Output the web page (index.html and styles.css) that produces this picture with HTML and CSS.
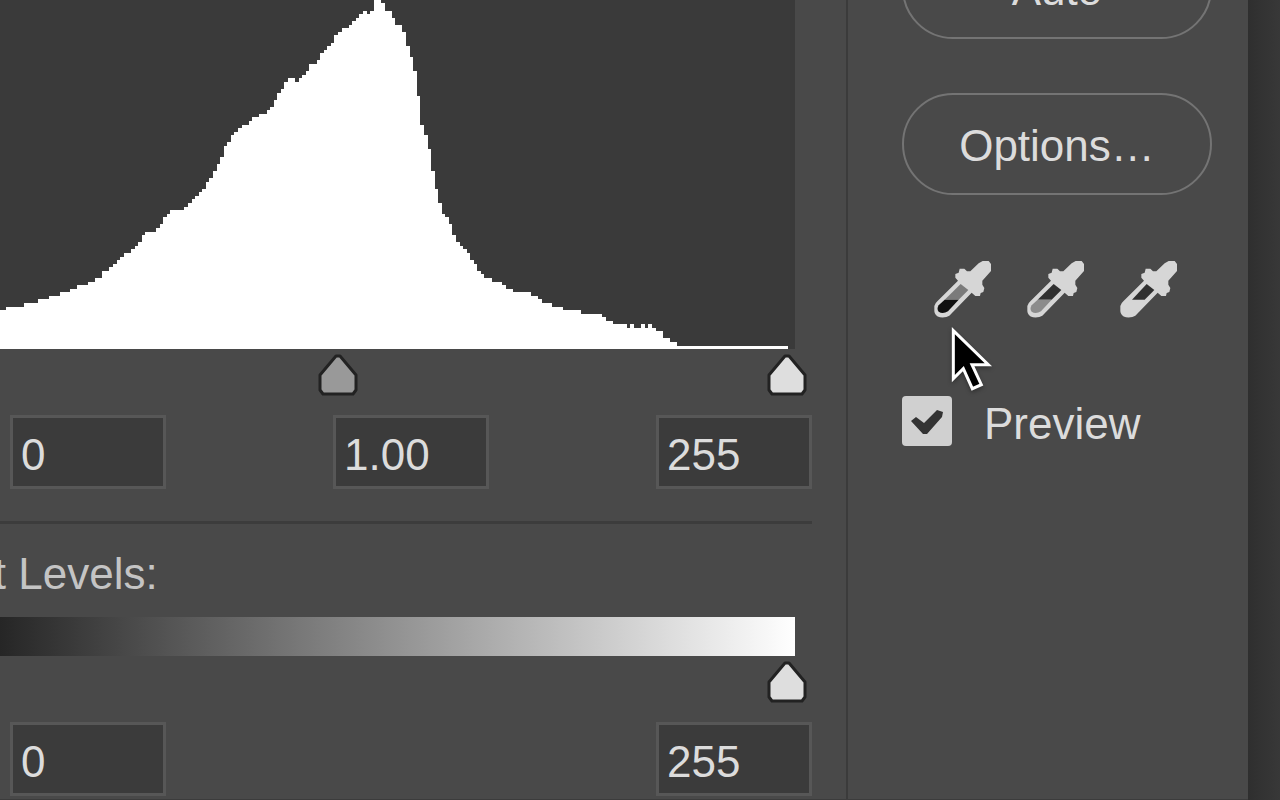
FILE: index.html
```html
<!DOCTYPE html>
<html lang="en">
<head>
  <meta charset="UTF-8" />
  <meta name="viewport" content="width=device-width, initial-scale=1.0" />
  <title>Levels</title>
  <link rel="stylesheet" href="styles.css">
</head>
<body>
  <div class="dialog">
    <main class="levels">
      <svg class="histogram" viewBox="0 0 2385 1047" preserveAspectRatio="none" role="img" aria-label="Histogram">
        <path d="M0 1047V930H18V920H72V909H115V898H147V888H179V877H211V866H232V856H265V845H286V834H307V813H328V802H339V791H350V780H361V770H371V759H393V748H404V738H414V727H425V706H436V695H467V684H479V673H490V652H500V641H511V631H553V620H564V609H575V598H585V588H596V577H607V566H617V545H628V534H639V513H650V491H660V470H671V438H682V427H693V406H703V395H714V384H725V374H746V363H757V352H778V342H800V331H810V320H821V299H832V278H843V267H853V245H864V235H886V245H896V235H907V224H918V213H928V192H950V181H960V160H971V149H982V138H993V128H1003V106H1014V96H1025V85H1046V74H1057V64H1068V53H1078V42H1089V32H1100V42H1111V32H1121V0H1143V10H1154V32H1175V53H1186V74H1207V96H1218V138H1229V170H1240V213H1250V288H1261V374H1272V406H1283V448H1293V513H1304V566H1315V609H1325V641H1336V652H1347V673H1357V706H1368V727H1379V738H1390V748H1401V759H1411V780H1422V791H1432V813H1443V823H1453V834H1475V845H1507V856H1518V866H1540V877H1592V888H1614V898H1625V909H1657V920H1690V930H1743V941H1807V952H1818V962H1839V973H1882V984H1891V973H1902V984H1923V973H1935V984H1945V973H1957V984H1968V994H1989V1015H2010V1026H2032V1037H2364V1047Z" />
      </svg>

      <div class="slider">
        <input class="mid" type="range" min="0" max="1000" value="414" aria-label="Midtones">
        <input type="range" min="0" max="255" value="255" aria-label="Highlights">
      </div>
      <div class="fields">
        <input type="text" value="0" aria-label="Input shadows">
        <input type="text" value="1.00" aria-label="Input midtones">
        <input type="text" value="255" aria-label="Input highlights">
      </div>

      <hr>

      <h2>Output Levels:</h2>
      <div class="ramp"></div>
      <div class="slider">
        <input type="range" min="0" max="255" value="255" aria-label="Output highlights">
      </div>
      <div class="fields">
        <input type="text" value="0" aria-label="Output shadows">
        <input type="text" value="255" aria-label="Output highlights value">
      </div>
    </main>

    <aside class="actions">
      <button class="pill" type="button">Auto</button>
      <button class="pill" type="button">Options…</button>

      <div class="droppers">
        <button type="button" aria-label="Set black point">
          <svg viewBox="0 0 174 180">
            <use href="#dropper" />
            <path fill="#7b7b7b" d="M80 72L103 90L74 119H32Z" />
            <path fill="#101010" d="M32 119H74L42 154Q26 164 14 155Q7 147 14 136Z" />
          </svg>
        </button>
        <button type="button" aria-label="Set gray point">
          <svg viewBox="0 0 174 180">
            <use href="#dropper" />
            <path fill="#303030" d="M80 72L103 90L74 119H32Z" />
            <path fill="#8c8c8c" d="M32 119H74L42 154Q26 164 14 155Q7 147 14 136Z" />
          </svg>
        </button>
        <button type="button" aria-label="Set white point">
          <svg viewBox="0 0 174 180">
            <use href="#dropper" />
            <path fill="#303030" d="M80 72L103 90L74 119H36Z" />
          </svg>
        </button>

        <svg class="cursor" viewBox="0 0 132 198">
          <path d="M10 17V161L40 131L67 191L94 179L66 119H115Z" />
        </svg>
      </div>

      <label class="preview">
        <input type="checkbox" checked>
        <span>Preview</span>
      </label>
    </aside>
  </div>

  <svg class="defs">
    <symbol id="dropper" viewBox="0 0 174 180">
      <path fill="#d6d6d6" d="M146 3H164L171 12V33L145 62V74L151 84L148 96L140 99L138 108H124L113 98L46 167Q36 174 18 172Q2 168 1 154V138Q3 130 10 124L72 62L64 53V42L74 38L77 26H91L99 34H109L134 10Z" />
    </symbol>
  </svg>
</body>
</html>
```

FILE: styles.css
```css
* {
  box-sizing: border-box;
}

body {
  margin: 0;
  background: linear-gradient(to right, #2f2f2f, #383838) right / 32px 100% no-repeat #383838;
  font-family: "Liberation Sans", Arial, sans-serif;
  font-size: 44px;
  line-height: 48px;
  color: #dcdcdc;
  overflow: hidden;
}

input,
button {
  margin: 0;
  font: inherit;
  color: inherit;
}

.defs {
  display: none;
}

.dialog {
  display: flex;
  min-height: 100vh;
  margin-right: 32px;
  background: #494949;
  border-bottom: 1px solid #3c3c3c;
}

/* Left side: histogram, sliders and values */
.levels {
  flex: 1;
  min-width: 0;
  padding-right: 34px;
  border-right: 2px solid #3b3b3b;
}

.histogram {
  display: block;
  width: calc(100% - 17px);
  height: 349px;
  background: #3a3a3a;
  fill: #fff;
  shape-rendering: crispEdges;
}

.slider {
  display: grid;
  height: 52px;
  margin-right: 4px;
}

.slider input {
  grid-area: 1 / 1;
  width: 100%;
  height: 52px;
  appearance: none;
  background: none;
  pointer-events: none;
}

.slider input::-webkit-slider-thumb {
  appearance: none;
  width: 42px;
  height: 44px;
  pointer-events: auto;
  background: url("data:image/svg+xml,%3Csvg xmlns='http://www.w3.org/2000/svg' viewBox='0 0 42 44'%3E%3Cpath d='M19 3h4l16 19v15l-3 4H6l-3-4V22z' fill='%23dedede' stroke='%23222' stroke-width='3' stroke-linejoin='round'/%3E%3C/svg%3E");
}

.slider .mid::-webkit-slider-thumb {
  background: url("data:image/svg+xml,%3Csvg xmlns='http://www.w3.org/2000/svg' viewBox='0 0 42 44'%3E%3Cpath d='M19 3h4l16 19v15l-3 4H6l-3-4V22z' fill='%23999' stroke='%23222' stroke-width='3' stroke-linejoin='round'/%3E%3C/svg%3E");
}

.fields {
  display: flex;
  justify-content: space-between;
  padding: 14px 0 0 10px;
}

.fields input {
  width: 156px;
  height: 74px;
  padding: 6px 8px 0;
  background: #3b3b3b;
  border: 3px solid #575757;
}

hr {
  height: 3px;
  margin: 32px 0 26px;
  border: 0;
  background: #3c3c3c;
}

h2 {
  margin: 0 0 19px -126px;
  font-size: 44px;
  font-weight: normal;
  color: #c4c4c4;
  white-space: nowrap;
}

.ramp {
  height: 39px;
  margin-right: 17px;
  background: linear-gradient(to right, #262626, #fff);
}

/* Right side: buttons, droppers, preview */
.actions {
  flex: none;
  width: 400px;
  margin-top: -63px;
  padding: 0 36px 0 54px;
}

.pill {
  display: block;
  width: 100%;
  height: 102px;
  margin-bottom: 54px;
  padding: 4px 0 0;
  background: none;
  border: 2px solid #747474;
  border-radius: 51px;
}

.droppers {
  position: relative;
  display: flex;
  gap: 35px;
  margin-top: 65px;
  padding-left: 32px;
}

.droppers button {
  width: 58px;
  height: 60px;
  padding: 0;
  background: none;
  border: 0;
}

.droppers button svg {
  display: block;
}

.cursor {
  position: absolute;
  top: 65px;
  left: 48px;
  width: 44px;
  height: 66px;
  stroke: #fff;
  stroke-width: 9px;
  filter: drop-shadow(0 2px 2px #0005);
}

.preview {
  display: flex;
  align-items: center;
  gap: 32px;
  margin-top: 74px;
}

.preview span {
  padding-top: 6px;
}

.preview input {
  width: 50px;
  height: 50px;
  appearance: none;
  background: #d0d0d0;
  border-radius: 4px;
}

.preview input:checked::after {
  content: "";
  display: block;
  height: 50px;
  background: #333;
  clip-path: polygon(9px 25px, 14px 21px, 22px 27px, 35px 14px, 41px 16px, 40px 21px, 25px 38px, 21px 38px);
}
```
